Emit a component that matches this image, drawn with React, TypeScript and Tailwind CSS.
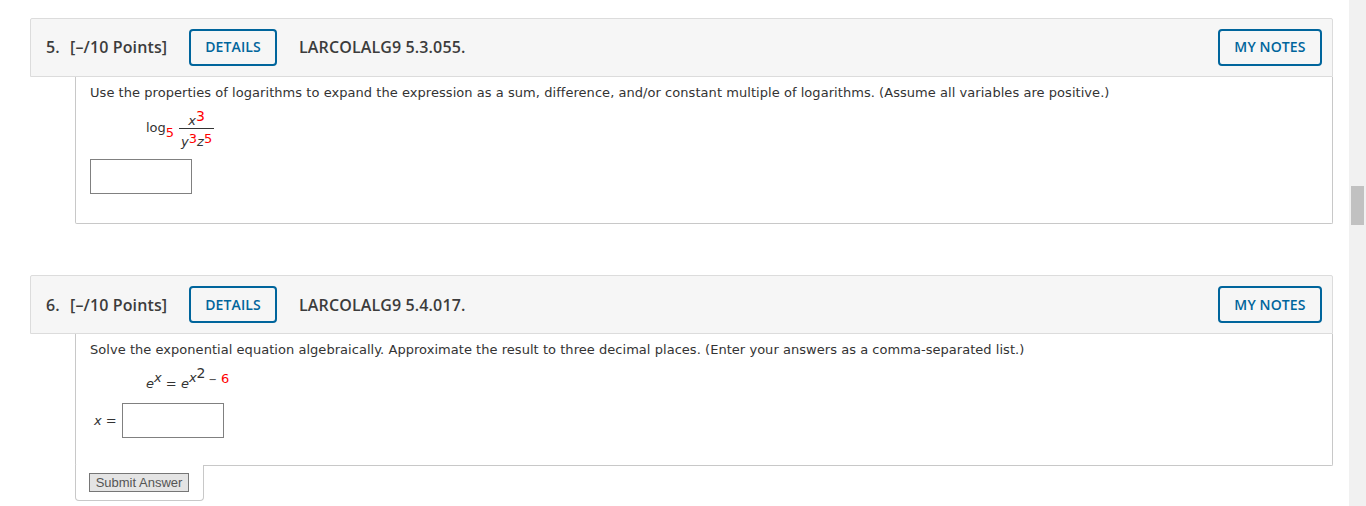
const blue = "border-2 border-[#00659c] rounded-[4px] text-[#00659c] font-semibold text-[14px] h-[37px] flex items-center justify-center";

function Header({ n, code, up }: { n: string; code: string; up?: boolean }) {
  const t = up ? "relative -top-px" : "";
  return (
    <div className="h-[59px] border border-[#dcdcdc] rounded-t-[2px] bg-[#f6f6f6] flex items-center text-[#3c3c3c] font-semibold text-[16px] tracking-[0.13px] font-['Open_Sans',sans-serif]">
      <span className={"ml-[15px] w-[24px] " + t}>{n}</span>
      <span className={"w-[119px] " + t}>[–/10 Points]</span>
      <span className={blue + " w-[88px]"}><span className={t}>DETAILS</span></span>
      <span className={"ml-[22px] " + t}>{code}</span>
      <span className={blue + " w-[104px] ml-auto mr-[10px]"}><span className={t}>MY NOTES</span></span>
    </div>
  );
}

const Red = ({ children }: { children: React.ReactNode }) => <span className="text-[#ff0000]">{children}</span>;

function Q5() {
  return (
    <section>
      <Header n="5." code="LARCOLALG9 5.3.055." up />
      <div className="ml-[45px] h-[147px] border-x border-b border-[#c8c8c8] rounded-b-[2px] pl-[14px] pt-[8px] text-[#333333] text-[13px] font-['DejaVu_Sans',sans-serif]">
        <p className="leading-[16px] tracking-[0.05px]">Use the properties of logarithms to expand the expression as a sum, difference, and/or constant multiple of logarithms. (Assume all variables are positive.)</p>
        <div className="ml-[56px] mt-[8px] h-[40px] flex items-center">
          <span className="mb-[3px]">log<Red><span className="relative top-[5px]">5</span></Red></span>
          <span className="ml-[5px] flex flex-col items-center">
            <span className="h-[19px] leading-[22px]"><i>x</i><Red><span className="relative top-[-4px] text-[14px]">3</span></Red></span>
            <span className="w-[35px] h-px bg-[#333333]"></span>
            <span className="h-[20px] leading-[25px] whitespace-nowrap"><i>y</i><Red><span className="relative top-[-3px]">3</span></Red><i>z</i><Red><span className="relative top-[-3px]">5</span></Red></span>
          </span>
        </div>
        <div className="mt-[10px] w-[102px] h-[35px] border border-[#808080] bg-white"></div>
      </div>
    </section>
  );
}

function Q6() {
  return (
    <section className="mt-[51px]">
      <Header n="6." code="LARCOLALG9 5.4.017." />
      <div className="ml-[45px] h-[132px] border-x border-b border-[#c8c8c8] rounded-b-[2px] pl-[14px] pt-[8px] text-[#333333] text-[13px] font-['DejaVu_Sans',sans-serif]">
        <p className="leading-[16px] tracking-[0.04px]">Solve the exponential equation algebraically. Approximate the result to three decimal places. (Enter your answers as a comma-separated list.)</p>
        <div className="ml-[56px] mt-[12px] h-[26px] flex items-center whitespace-pre">
          <span><i>e</i><span className="relative top-[-6px]"><i>x</i></span> = <i>e</i><span className="relative top-[-6px]"><i>x</i><span className="relative top-[-4px] text-[14px]">2</span></span><span className="relative top-[-5px] ml-[3px] mr-[4px] text-[10px]">−</span><span className="relative top-[-5px]"><Red>6</Red></span></span>
        </div>
        <div className="mt-[7px] flex items-center">
          <span className="ml-[4px] w-[28px]"><i>x</i> =</span>
          <div className="w-[102px] h-[35px] border border-[#808080] bg-white"></div>
        </div>
      </div>
      <div className="ml-[45px] -mt-px relative w-[129px] h-[36px] bg-white border-x border-b border-[#c8c8c8] rounded-b-[4px] pl-[13px] pt-[8px]">
        <button className="w-[100px] h-[19px] bg-[#e4e4e4] border border-[#767676] text-[#555555] text-[13px] leading-[16px] font-['Liberation_Sans',sans-serif] flex items-center justify-center">Submit Answer</button>
      </div>
    </section>
  );
}

export default function App() {
  return (
    <div className="h-[506px] overflow-hidden flex bg-white">
      <main className="flex-1 pl-[30px] pr-[16px] pt-[18px]">
        <Q5 />
        <Q6 />
      </main>
      <div className="w-[17px] bg-[#f1f1f1] px-[2px] pt-[186px]">
        <div className="h-[39px] bg-[#c1c1c1]"></div>
      </div>
    </div>
  );
}
